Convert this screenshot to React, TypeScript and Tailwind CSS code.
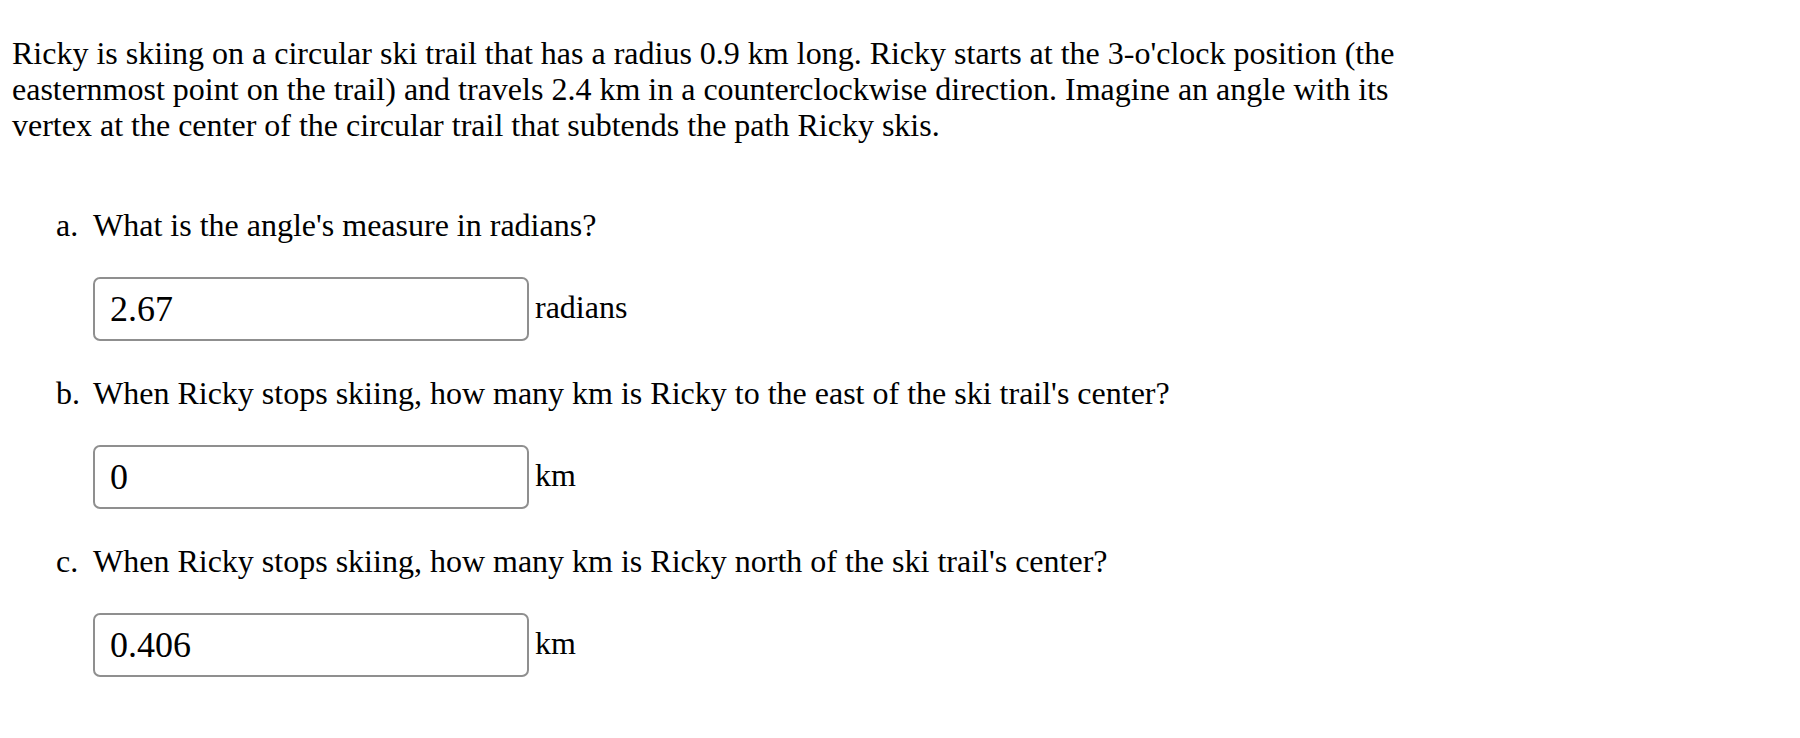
const items = [
  { mark: 'a.', q: "What is the angle's measure in radians?", value: '2.67', unit: 'radians' },
  { mark: 'b.', q: "When Ricky stops skiing, how many km is Ricky to the east of the ski trail's center?", value: '0', unit: 'km' },
  { mark: 'c.', q: "When Ricky stops skiing, how many km is Ricky north of the ski trail's center?", value: '0.406', unit: 'km' },
]

export default function App() {
  return (
    <div className="min-h-screen bg-white text-black px-[12px] pt-[35px] text-[32px] leading-[36px] font-['Liberation_Serif',serif]">
      <p className="max-w-[1430px]">
        Ricky is skiing on a circular ski trail that has a radius 0.9 km long. Ricky starts at the 3-o'clock position (the
        easternmost point on the trail) and travels 2.4 km in a counterclockwise direction. Imagine an angle with its
        vertex at the center of the circular trail that subtends the path Ricky skis.
      </p>
      <ol className="mt-[64px] flex flex-col gap-[34px]">
        {items.map((it) => (
          <li key={it.mark} className="flex flex-col gap-[34px]">
            <div className="flex">
              <span className="w-[81px] pl-[44px] shrink-0">{it.mark}</span>
              <span>{it.q}</span>
            </div>
            <div className="flex items-center pl-[81px]">
              <input
                readOnly
                value={it.value}
                className="w-[436px] h-[64px] border-2 border-[#8f8f8f] rounded-[7px] px-[15px] text-[36px] font-['Liberation_Serif',serif] text-black bg-white outline-none"
              />
              <span className="ml-[6px] -mt-[4px]">{it.unit}</span>
            </div>
          </li>
        ))}
      </ol>
    </div>
  )
}
